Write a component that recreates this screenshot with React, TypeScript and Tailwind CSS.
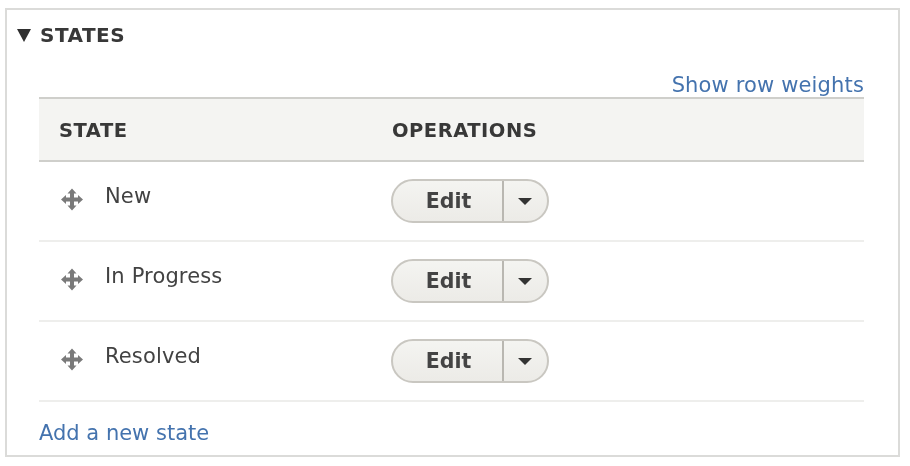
const states = ["New", "In Progress", "Resolved"];

function DragHandle() {
  return (
    <svg width="24" height="24" viewBox="0 0 24 24" className="-mt-[3px] shrink-0 text-[#7a7a7a]" fill="currentColor">
      <path d="M12 0.500l4.500 5h-2.500v4h4v-2.500l5 4.500-5 4.500v-2.500h-4v4h2.500l-4.500 5-4.500-5h2.500v-4h-4v2.500l-5-4.500 5-4.500v2.500h4v-4H7.500z" />
    </svg>
  );
}

function EditButton() {
  return (
    <div className="-ml-[1px] flex h-[44px] w-[158px] rounded-full border-2 border-[#c9c7c1] bg-gradient-to-b from-[#f4f4f1] to-[#ecebe7] text-[#444]">
      <button className="flex-1 border-r-2 border-[#b9b7b1] pl-[2px] pt-[1px] text-[20.500px] font-bold">Edit</button>
      <div className="flex w-[43px] items-center justify-center pr-[2px]">
        <span className="h-0 w-0 border-x-[7px] border-t-[7px] border-x-transparent border-t-[#333]" />
      </div>
    </div>
  );
}

export default function App() {
  return (
    <div className="h-[466px] w-[910px] bg-white pl-[5px] pt-[8px] font-['DejaVu_Sans',sans-serif] text-[#424242] blur-[0.4px]">
      <div className="flex h-[449px] w-[895px] flex-col border-2 border-[#dbdbd9] pl-[32px] pr-[34px]">
        <div className="-ml-[22px] mt-[11px] flex h-[28px] items-center gap-[9px]">
          <span className="h-0 w-0 border-x-[7px] border-t-[13px] border-x-transparent border-t-[#2f2f2f]" />
          <span className="text-[20px] font-bold tracking-[0.5px] text-[#383838]">STATES</span>
        </div>
        <div className="mt-[16px] flex h-[32px] items-center justify-end pt-[10px]">
          <a className="text-[21px] tracking-[0.15px] text-[#4473ae]">Show row weights</a>
        </div>
        <div className="flex h-[65px] items-center border-y-2 border-[#cfcfcb] bg-[#f4f4f2] pt-[3px] text-[19.500px] font-bold tracking-[0.5px] text-[#383838]">
          <div className="w-[353px] pl-[20px]">STATE</div>
          <div>OPERATIONS</div>
        </div>
        {states.map((s) => (
          <div key={s} className="flex h-[80px] items-center border-b-2 border-[#eeeeec]">
            <div className="flex w-[353px] items-center pl-[21px]">
              <DragHandle />
              <span className="-mt-[8px] ml-[21px] text-[21px] tracking-[0.15px]">{s}</span>
            </div>
            <EditButton />
          </div>
        ))}
        <a className="mt-[16px] text-[21px] text-[#4473ae]">Add a new state</a>
      </div>
    </div>
  );
}
